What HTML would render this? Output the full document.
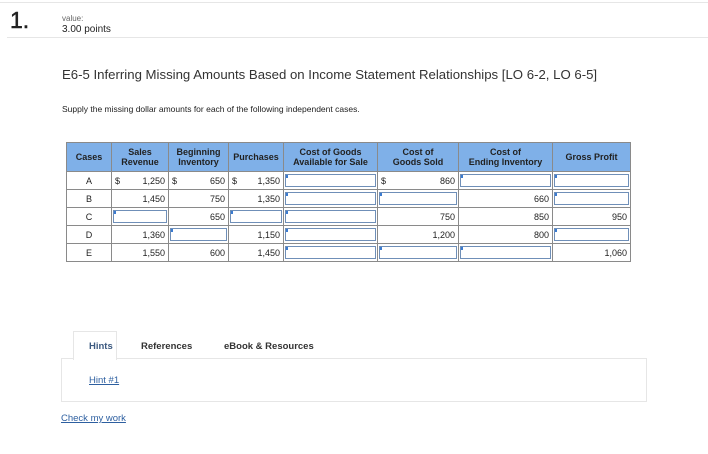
<!DOCTYPE html>
<html><head><style>
body{margin:0;width:708px;height:454px;background:#fff;font-family:"Liberation Sans",Arial,sans-serif;position:relative;overflow:hidden;color:#222}
.a{position:absolute}
table{position:absolute;left:66px;top:142px;border-collapse:collapse;font-size:9px;table-layout:fixed}
td,th{border:1px solid #8a8a8a;padding:0 3px;height:18px;box-sizing:border-box;line-height:10px}
th{background:#7fb0e8;font-weight:bold;height:29px;line-height:10px;text-align:center;color:#222}
td{text-align:right}
td.c{text-align:center}
td.i{padding:1px}
.in{border:1px solid #6f8fb8;height:13px;box-sizing:border-box;position:relative;background:#fff}
.in:before{content:"";position:absolute;left:0;top:0;width:2px;height:3px;background:#3b7bd0}
.d{float:left}
</style></head><body>
<div class="a" style="left:0;top:2px;width:708px;border-top:1px solid #e6e6e6"></div>
<div class="a" style="left:10px;top:7px;font-size:23px;color:#222;-webkit-text-stroke:0.5px #222">1.</div>
<div class="a" style="left:62px;top:14px;font-size:8px;color:#666">value:</div>
<div class="a" style="left:62px;top:24px;font-size:10px;color:#222">3.00 points</div>
<div class="a" style="left:7px;top:37px;width:701px;border-top:1px solid #e6e6e6"></div>
<div class="a" style="left:62px;top:67px;font-size:13.2px;color:#333">E6-5 Inferring Missing Amounts Based on Income Statement Relationships [LO 6-2, LO 6-5]</div>
<div class="a" style="left:62px;top:104px;font-size:8.5px;color:#222">Supply the missing dollar amounts for each of the following independent cases.</div>
<table>
<colgroup><col style="width:45px"><col style="width:57px"><col style="width:60px"><col style="width:55px"><col style="width:94px"><col style="width:81px"><col style="width:94px"><col style="width:78px"></colgroup>
<tr><th>Cases</th><th>Sales<br>Revenue</th><th>Beginning<br>Inventory</th><th>Purchases</th><th>Cost of Goods<br>Available for Sale</th><th>Cost of<br>Goods Sold</th><th>Cost of<br>Ending Inventory</th><th>Gross Profit</th></tr>
<tr><td class="c">A</td><td><span class="d">$</span>1,250</td><td><span class="d">$</span>650</td><td><span class="d">$</span>1,350</td><td class="i"><div class="in"></div></td><td><span class="d">$</span>860</td><td class="i"><div class="in"></div></td><td class="i"><div class="in"></div></td></tr>
<tr><td class="c">B</td><td>1,450</td><td>750</td><td>1,350</td><td class="i"><div class="in"></div></td><td class="i"><div class="in"></div></td><td>660</td><td class="i"><div class="in"></div></td></tr>
<tr><td class="c">C</td><td class="i"><div class="in"></div></td><td>650</td><td class="i"><div class="in"></div></td><td class="i"><div class="in"></div></td><td>750</td><td>850</td><td>950</td></tr>
<tr><td class="c">D</td><td>1,360</td><td class="i"><div class="in"></div></td><td>1,150</td><td class="i"><div class="in"></div></td><td>1,200</td><td>800</td><td class="i"><div class="in"></div></td></tr>
<tr><td class="c">E</td><td>1,550</td><td>600</td><td>1,450</td><td class="i"><div class="in"></div></td><td class="i"><div class="in"></div></td><td class="i"><div class="in"></div></td><td>1,060</td></tr>
</table>
<div class="a" style="left:61px;top:358px;width:584px;height:42px;border:1px solid #e6e6e6"></div>
<div class="a" style="left:73px;top:331px;width:42px;height:28px;border:1px solid #e6e6e6;border-bottom:none;background:#fff"></div>
<div class="a" style="left:89px;top:341px;font-size:9.5px;font-weight:bold;color:#3d5a80">Hints</div>
<div class="a" style="left:141px;top:341px;font-size:9.5px;font-weight:bold;color:#333">References</div>
<div class="a" style="left:224px;top:341px;font-size:9.5px;font-weight:bold;color:#333">eBook &amp; Resources</div>
<div class="a" style="left:89px;top:375px;font-size:9.5px;color:#2d5fa0;text-decoration:underline">Hint #1</div>
<div class="a" style="left:61px;top:413px;font-size:9.5px;color:#2d5fa0;text-decoration:underline">Check my work</div>
</body></html>
